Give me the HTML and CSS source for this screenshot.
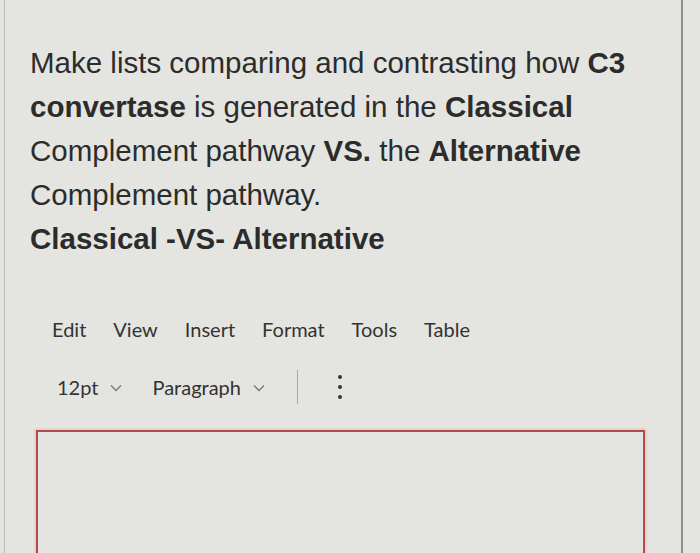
FILE: index.html
```html
<!DOCTYPE html>
<html>
<head>
<meta charset="utf-8">
<link rel="stylesheet" href="styles.css">
</head>
<body>
<div class="frame">
  <div class="question">
    <p class="prompt">Make lists comparing and contrasting how <b>C3 convertase</b> is generated in the <b>Classical</b> Complement pathway <b>VS.</b> the <b>Alternative</b> Complement pathway.</p>
    <p class="sub"><b>Classical -VS- Alternative</b></p>
  </div>
  <div class="editor">
    <div class="menubar">
      <span>Edit</span><span>View</span><span>Insert</span><span>Format</span><span>Tools</span><span>Table</span>
    </div>
    <div class="toolbar">
      <span class="drop">12pt <svg class="chev" width="12" height="8" viewBox="0 0 12 8"><path d="M1 1.5 L6 6.5 L11 1.5" fill="none" stroke="#777" stroke-width="1.3"/></svg></span>
      <span class="drop para">Paragraph <svg class="chev" width="12" height="8" viewBox="0 0 12 8"><path d="M1 1.5 L6 6.5 L11 1.5" fill="none" stroke="#777" stroke-width="1.3"/></svg></span>
      <span class="sep"></span>
      <span class="more"><i></i><i></i><i></i></span>
    </div>
    <div class="textarea"></div>
  </div>
</div>
</body>
</html>
```
FILE: styles.css
```css
html, body {
  margin: 0;
  padding: 0;
  background: #e4e5e1;
  height: 553px;
  overflow: hidden;
}
.frame {
  margin-left: 4px;
  width: 679px;
  height: 553px;
  border-left: 1px solid #b9bab6;
  border-right: 2px solid #8e8f8c;
  box-sizing: border-box;
  padding-top: 41px;
}
.question {
  padding-left: 25px;
  font-family: "Liberation Sans", Arial, sans-serif;
  color: #2c2c2c;
  font-size: 29.5px;
  line-height: 44px;
}
.question p { margin: 0; }
.prompt { width: 640px; }
.editor {
  padding-top: 48px;
}
.menubar {
  display: flex;
  gap: 27px;
  padding-left: 47px;
  font-family: Lato, "Open Sans", sans-serif;
  font-size: 20px;
  color: #333;
  height: 40px;
  align-items: center;
}
.toolbar {
  display: flex;
  align-items: center;
  padding-left: 52px;
  margin-top: 18px;
  height: 40px;
  font-family: Lato, "Open Sans", sans-serif;
  font-size: 20px;
  color: #333;
}
.drop { display: flex; align-items: center; gap: 12px; }
.chev { margin-top: 2px; }
.para { margin-left: 30px; }
.sep {
  width: 1px;
  height: 34px;
  background: #a9aaa7;
  margin-left: 32px;
}
.more {
  display: flex;
  flex-direction: column;
  gap: 6px;
  margin-left: 40px;
}
.more i {
  display: block;
  width: 4px;
  height: 4px;
  border-radius: 50%;
  background: #333;
}
.textarea {
  margin-top: 23px;
  margin-left: 31px;
  width: 609px;
  height: 140px;
  border: 2px solid #b54a4a;
  border-bottom: none;
  box-shadow: 0 0 2px 1px rgba(240,150,150,0.5);
  box-sizing: border-box;
}
```
